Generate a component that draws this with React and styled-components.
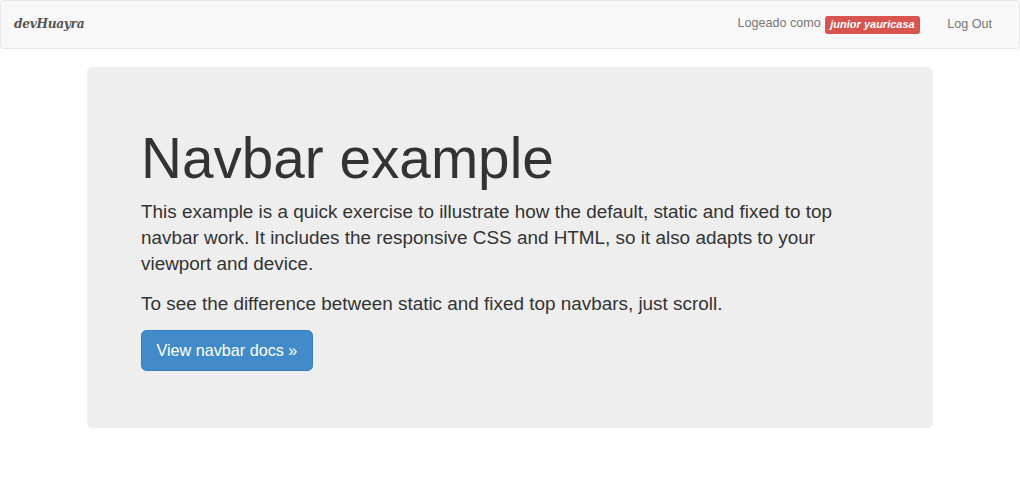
import React from 'react'
import styled, { createGlobalStyle } from 'styled-components'

const GlobalStyle = createGlobalStyle`
  html, body {
    margin: 0;
    padding: 0;
    background: #fff;
  }
  body {
    font-family: "Liberation Sans", Arial, Helvetica, sans-serif;
    font-size: 12.6px;
    line-height: 1.42857;
    color: #333;
  }
`

const Navbar = styled.nav`
  display: flex;
  align-items: center;
  justify-content: space-between;
  box-sizing: border-box;
  height: 49px;
  margin-bottom: 18px;
  background: #f8f8f8;
  border: 1px solid #e7e7e7;
  border-radius: 3.6px;
`

const Brand = styled.a`
  padding: 0 13px;
  font-family: "DejaVu Serif", "Liberation Serif", serif;
  font-style: italic;
  font-weight: bold;
  font-size: 12.2px;
  letter-spacing: -0.3px;
  color: #555;
  text-decoration: none;
`

const NavRight = styled.div`
  display: flex;
  align-items: center;
  padding-right: 13.5px;
`

const NavText = styled.span`
  color: #777;
  margin-right: 13.5px;
`

const Label = styled.span`
  display: inline-block;
  margin-left: 4px;
  padding: 3px 5.5px 4px;
  font-size: 11px;
  font-weight: bold;
  font-style: italic;
  line-height: 1;
  color: #fff;
  background: #d9534f;
  border-radius: 2.7px;
  vertical-align: -1px;
`

const NavLink = styled.a`
  padding: 0 13.5px;
  color: #777;
  text-decoration: none;
`

const Jumbotron = styled.div`
  box-sizing: border-box;
  width: 846px;
  margin: 0 auto;
  padding: 43.2px 54px 44px;
  background: #eee;
  border-radius: 5.4px;
`

const Title = styled.h1`
  margin: 18px 0 8px;
  font-size: 56.7px;
  font-weight: 500;
  line-height: 1.1;
  color: #333;
`

const Lead = styled.p`
  margin: 0 0 13px;
  font-size: 18.9px;
  font-weight: 200;
  line-height: 1.4;
`

const Button = styled.a`
  display: inline-block;
  padding: 9px 14.4px;
  font-size: 16.2px;
  line-height: 1.25;
  color: #fff;
  background: #428bca;
  border: 1px solid #357ebd;
  border-radius: 5.4px;
  text-decoration: none;
  vertical-align: top;
`

export default function App() {
  return (
    <>
      <GlobalStyle />
      <Navbar>
        <Brand href="#">devHuayra</Brand>
        <NavRight>
          <NavText>
            Logeado como<Label>junior yauricasa</Label>
          </NavText>
          <NavLink href="#">Log Out</NavLink>
        </NavRight>
      </Navbar>
      <Jumbotron>
        <Title>Navbar example</Title>
        <Lead>
          This example is a quick exercise to illustrate how the default, static and fixed to top
          navbar work. It includes the responsive CSS and HTML, so it also adapts to your viewport
          and device.
        </Lead>
        <Lead>To see the difference between static and fixed top navbars, just scroll.</Lead>
        <Lead>
          <Button href="#">View navbar docs &raquo;</Button>
        </Lead>
      </Jumbotron>
    </>
  )
}
